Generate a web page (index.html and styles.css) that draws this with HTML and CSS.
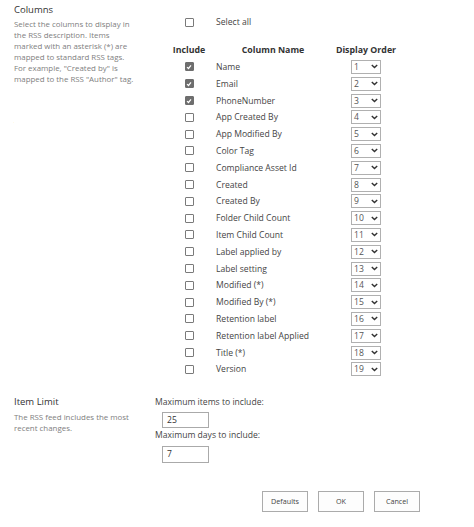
FILE: index.html
```html
<!DOCTYPE html>
<html>
<head>
    <title>RSS Settings</title>
    <link rel="stylesheet" href="styles.css">
</head>
<body>
    <div class="section columns-section">
        <div class="info">
            <h3>Columns</h3>
            <p>Select the columns to display in<br>the RSS description. Items<br>marked with an asterisk (*) are<br>mapped to standard RSS tags.<br>For example, "Created by" is<br>mapped to the RSS "Author" tag.</p>
        </div>
        <div class="field">
            <div class="row select-all">
                <div class="cell inc"><span class="cb"></span></div>
                <div class="cell name">Select all</div>
            </div>
            <div class="row head">
                <div class="cell inc">Include</div>
                <div class="cell name">Column Name</div>
                <div class="cell order">Display Order</div>
            </div>
            <div id="rows"></div>
        </div>
    </div>

    <div class="section limit-section">
        <div class="info">
            <h3>Item Limit</h3>
            <p>The RSS feed includes the most<br>recent changes.</p>
        </div>
        <div class="field">
            <label>Maximum items to include:</label>
            <div class="text-input">25</div>
            <label>Maximum days to include:</label>
            <div class="text-input days">7</div>
        </div>
    </div>

    <div class="buttons">
        <button>Defaults</button>
        <button>OK</button>
        <button>Cancel</button>
    </div>

    <script>
        const columns = [
            ['Name', true], ['Email', true], ['PhoneNumber', true],
            ['App Created By'], ['App Modified By'], ['Color Tag'],
            ['Compliance Asset Id'], ['Created'], ['Created By'],
            ['Folder Child Count'], ['Item Child Count'], ['Label applied by'],
            ['Label setting'], ['Modified (*)'], ['Modified By (*)'],
            ['Retention label'], ['Retention label Applied'], ['Title (*)'], ['Version']
        ];
        const chevron = '<svg width="7" height="5" viewBox="0 0 7 5"><path d="M0.8 0.9 L3.5 3.6 L6.2 0.9" fill="none" stroke="#333" stroke-width="1.4"/></svg>';
        const tick = '<svg width="6" height="6" viewBox="0 0 6 6"><path d="M1 3.1 L2.5 4.5 L5 1.4" fill="none" stroke="#fff" stroke-width="1.2"/></svg>';

        let html = '';
        columns.forEach(([name, checked], i) => {
            html += `<div class="row item">
                <div class="cell inc"><span class="cb${checked ? ' on' : ''}">${checked ? tick : ''}</span></div>
                <div class="cell name">${name}</div>
                <div class="cell order"><div class="dropdown"><span>${i + 1}</span>${chevron}</div></div>
            </div>`;
        });
        document.getElementById('rows').innerHTML = html;
    </script>
</body>
</html>
```

FILE: styles.css
```css
body { margin: 0; font-family: 'Open Sans', 'Noto Sans', sans-serif; color: #444; background: #fff; }
.section { display: grid; grid-template-columns: 141px 1fr; padding-left: 14px; }
.info h3 { font-size: 9.5px; font-weight: normal; color: #333; margin: 0; line-height: 13px; }
.info p { font-size: 7.9px; color: #808080; margin: 3px 0 0; line-height: 11px; white-space: nowrap; }
.columns-section { padding-top: 3px; }
.columns-section .field { padding-top: 11px; padding-left: 16px; }
.row { display: grid; grid-template-columns: 36px 132px 54px; align-items: center; font-size: 8.6px; }
.select-all { height: 16px; margin-bottom: 11px; }
.head { height: 17.6px; font-weight: bold; color: #333; font-size: 8.8px; white-space: nowrap; }
.head .cell { text-align: center; }
.item { height: 16.8px; }
.cell.inc { display: flex; justify-content: center; }
.cell.name { padding-left: 9px; }
.head .cell.name { padding-left: 0; }
.cell.order { display: flex; justify-content: center; }
.cb { width: 7px; height: 7px; border: 1px solid #7a7a7a; border-radius: 1px; display: flex; align-items: center; justify-content: center; background: #fff; }
.cb.on { background: #6e6e6e; border-color: #6e6e6e; }
.dropdown { width: 24px; height: 12px; border: 1px solid #b0b0b0; display: flex; align-items: center; justify-content: space-between; padding: 0 2px 0 2px; box-sizing: content-box; font-size: 8.6px; color: #555; line-height: 12px; }
.limit-section { margin-top: 17px; }
.limit-section .info p { margin-top: 4px; }
.limit-section .field { padding-left: 0; padding-top: 1px; }
.limit-section label { display: block; font-size: 8.6px; color: #444; line-height: 13px; }
.text-input { width: 41px; height: 14px; border: 1px solid #aaa; margin: 3px 0 1px 7px; font-size: 8.6px; line-height: 14px; padding-left: 4px; color: #333; }
.text-input.days { margin-top: 4px; height: 15px; }
.buttons { display: flex; gap: 10px; padding-left: 262px; margin-top: 27px; }
.buttons button { width: 46px; height: 21px; border: 1px solid #ababab; background: #fdfdfd; font-family: inherit; font-size: 7.2px; color: #444; padding: 0; }
```
